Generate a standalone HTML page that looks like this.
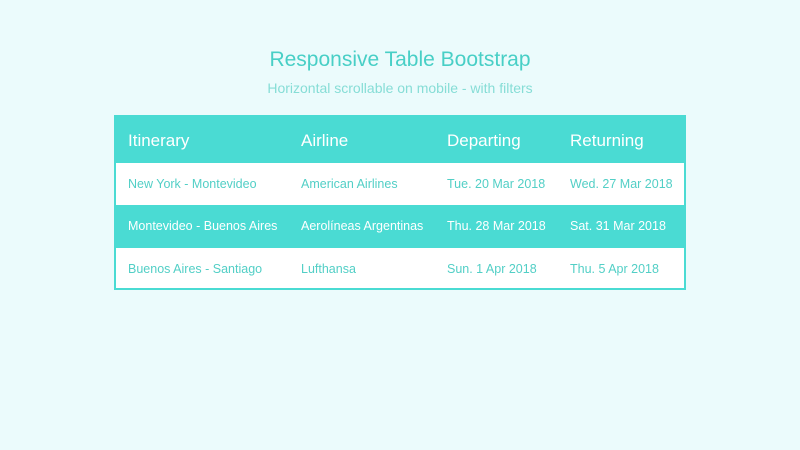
<!DOCTYPE html>
<html><head><style>
body{margin:0;width:800px;height:450px;background:#ebfbfc;font-family:"Liberation Sans",sans-serif;overflow:hidden;position:relative}
h1{position:absolute;top:48px;left:0;width:800px;text-align:center;margin:0;font-weight:normal;font-size:21px;color:#48cfc6}
h2{position:absolute;top:80px;left:0;width:800px;text-align:center;margin:0;font-weight:normal;font-size:14px;color:#86ddd6}
.t{position:absolute;left:114px;top:115px;width:568px;height:171px;border:2px solid #4adbd3;background:#4adbd3}
.r{position:absolute;left:0;width:568px}
.r span{position:absolute;white-space:nowrap}
.h{top:0;height:46px;color:#fff;font-size:17px}
.h span{top:14px}
.w{background:#fff;color:#52cfc6;font-size:12.5px}
.c{color:#fff;font-size:12.5px}
.w span,.c span{top:14px}
.a{left:12px}.b{left:185px}.d{left:331px}.e{left:454px}
</style></head><body>
<h1>Responsive Table Bootstrap</h1>
<h2>Horizontal scrollable on mobile - with filters</h2>
<div class="t">
<div class="r h"><span class="a">Itinerary</span><span class="b">Airline</span><span class="d">Departing</span><span class="e">Returning</span></div>
<div class="r w" style="top:46px;height:42px"><span class="a">New York - Montevideo</span><span class="b">American Airlines</span><span class="d">Tue. 20 Mar 2018</span><span class="e">Wed. 27 Mar 2018</span></div>
<div class="r c" style="top:88px;height:43px"><span class="a">Montevideo - Buenos Aires</span><span class="b">Aerolíneas Argentinas</span><span class="d">Thu. 28 Mar 2018</span><span class="e">Sat. 31 Mar 2018</span></div>
<div class="r w" style="top:131px;height:40px"><span class="a">Buenos Aires - Santiago</span><span class="b">Lufthansa</span><span class="d">Sun. 1 Apr 2018</span><span class="e">Thu. 5 Apr 2018</span></div>
</div>
</body></html>
